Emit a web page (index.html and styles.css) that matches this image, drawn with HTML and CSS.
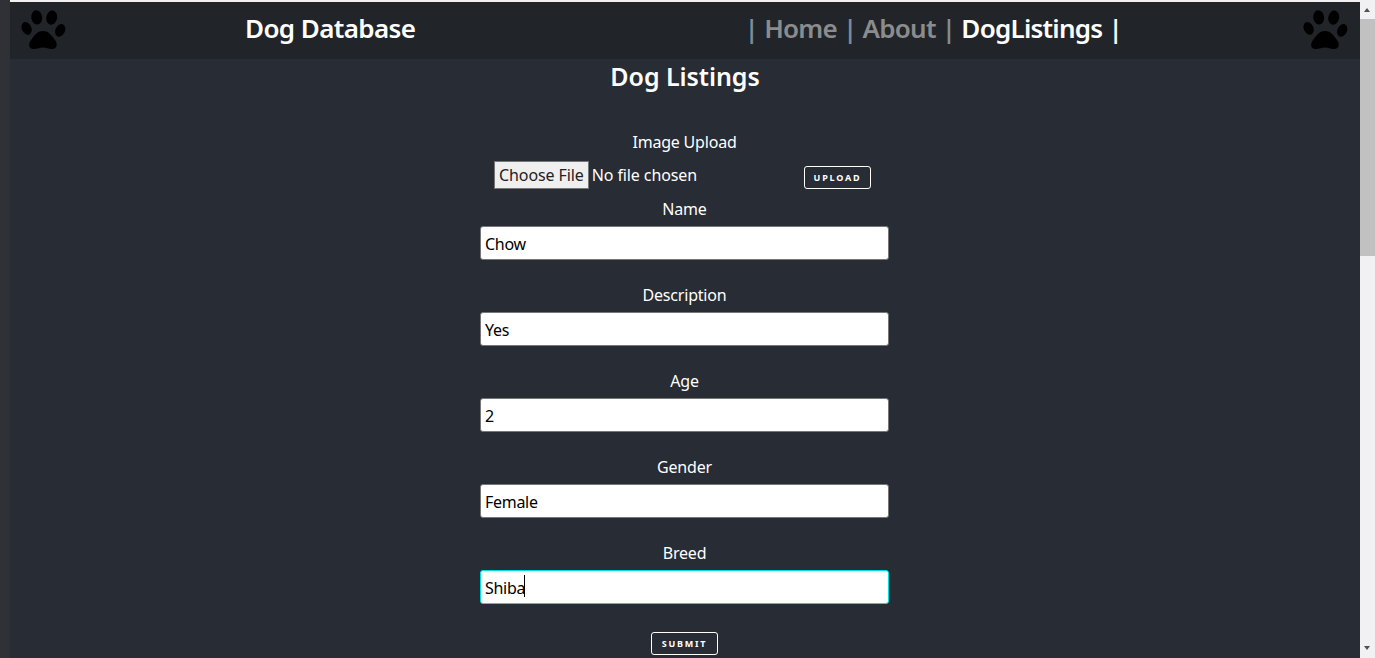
FILE: index.html
```html
<!DOCTYPE html>
<html lang="en">
<head>
<meta charset="utf-8">
<title>Dog Database</title>
<link rel="stylesheet" href="styles.css">
</head>
<body>
<div class="gutter"></div>
<div class="page">
  <nav class="navbar">
    <svg class="paw" viewBox="0 0 45 40" aria-hidden="true">
      <ellipse cx="15.7" cy="7.4" rx="5.4" ry="7.2" transform="rotate(-8 15.7 7.4)"/>
      <ellipse cx="30.7" cy="7.6" rx="5.4" ry="7.2" transform="rotate(10 30.7 7.6)"/>
      <ellipse cx="5.6" cy="18.4" rx="4.8" ry="6.6" transform="rotate(-24 5.6 18.4)"/>
      <ellipse cx="39.2" cy="20.4" rx="4.8" ry="6.6" transform="rotate(24 39.2 20.4)"/>
      <path d="M22 21C28 21 31 26 34 30C37 34 36 39 31 39C27 39 25 37.600 22 37.600C19 37.600 17 39 12.500 39C7.500 39 7 34 10 30C13 26 16 21 22 21Z"/>
    </svg>
    <a class="brand" href="#">Dog Database</a>
    <div class="links">
      <span class="pipe">|</span>
      <a class="link" href="#">Home</a>
      <span class="pipe">|</span>
      <a class="link" href="#">About</a>
      <span class="pipe">|</span>
      <a class="link active" href="#">DogListings</a>
      <span class="pipe last">|</span>
    </div>
    <svg class="paw" viewBox="0 0 45 40" aria-hidden="true">
      <ellipse cx="15.7" cy="7.4" rx="5.4" ry="7.2" transform="rotate(-8 15.7 7.4)"/>
      <ellipse cx="30.7" cy="7.6" rx="5.4" ry="7.2" transform="rotate(10 30.7 7.6)"/>
      <ellipse cx="5.6" cy="18.4" rx="4.8" ry="6.6" transform="rotate(-24 5.6 18.4)"/>
      <ellipse cx="39.2" cy="20.4" rx="4.8" ry="6.6" transform="rotate(24 39.2 20.4)"/>
      <path d="M22 21C28 21 31 26 34 30C37 34 36 39 31 39C27 39 25 37.600 22 37.600C19 37.600 17 39 12.500 39C7.500 39 7 34 10 30C13 26 16 21 22 21Z"/>
    </svg>
  </nav>
  <main class="content">
    <h1 class="title">Dog Listings</h1>
    <form class="form">
      <label class="label upload-label">Image Upload</label>
      <div class="upload-row">
        <input class="file" type="file">
        <button class="btn" type="button">Upload</button>
      </div>
      <div class="field">
        <label class="label">Name</label>
        <input class="input" type="text" value="Chow">
      </div>
      <div class="field">
        <label class="label">Description</label>
        <input class="input" type="text" value="Yes">
      </div>
      <div class="field">
        <label class="label">Age</label>
        <input class="input" type="text" value="2">
      </div>
      <div class="field">
        <label class="label">Gender</label>
        <input class="input" type="text" value="Female">
      </div>
      <div class="field">
        <label class="label">Breed</label>
        <div class="input-wrap">
          <input class="input focused" type="text" value="Shiba">
          <span class="caret"></span>
        </div>
      </div>
      <button class="btn submit" type="button">Submit</button>
    </form>
  </main>
</div>
<div class="scrollbar">
  <div class="arrow up"></div>
  <div class="track"><div class="thumb"></div></div>
  <div class="arrow down"></div>
</div>
</body>
</html>
```
FILE: styles.css
```css
* { box-sizing: border-box; }
html, body { height: 100%; }
body {
  margin: 0;
  display: flex;
  height: 658px;
  overflow: hidden;
  background: #282c34;
  color: #fff;
  font-family: "Noto Sans", "Open Sans", sans-serif;
}
.gutter { width: 10px; flex: none; background: #2f3136; }
.page {
  flex: 1;
  min-width: 0;
  border-top: 2px solid #f1f1f1;
  background: #282c34;
  overflow: hidden;
}
.navbar {
  height: 57px;
  background: #212529;
  display: flex;
  align-items: center;
  padding: 0 12px 0 11px;
}
.paw { width: 45px; height: 40px; flex: none; fill: #000; filter: blur(0.4px); margin-top: -2px; }
.brand {
  margin-left: 179px;
  margin-top: -6px;
  color: #fff;
  font-size: 26px;
  font-weight: 600;
  letter-spacing: -0.6px;
  text-decoration: none;
}
.links {
  margin-left: auto;
  margin-right: 181px;
  margin-top: -6px;
  display: flex;
  gap: 6px;
  font-size: 26px;
  font-weight: 600;
  letter-spacing: -0.75px;
}
.link { color: #8b8c8d; text-decoration: none; }
.link.active { color: #fff; }
.pipe { color: #7f8c99; }
.pipe.last { color: #fff; }
.content { display: flex; flex-direction: column; align-items: center; }
.title {
  margin: -1px 0 0;
  font-size: 25px;
  line-height: 36px;
  font-weight: 600;
  letter-spacing: -0.05px;
}
.form {
  width: 409px;
  margin-top: 35px;
  margin-right: 1px;
  display: flex;
  flex-direction: column;
  align-items: center;
}
.label { display: block; font-size: 16px; line-height: 26px; text-align: center; letter-spacing: -0.2px; }
.upload-row {
  width: 100%;
  display: flex;
  align-items: flex-start;
  justify-content: space-between;
  padding: 5px 18px 0 14px;
  height: 41px;
}
.file {
  width: 300px;
  margin-top: 1px;
  color: #fff;
  font: 16px/27px "Noto Sans", sans-serif;
  letter-spacing: -0.1px;
}
.file::file-selector-button {
  font: inherit;
  letter-spacing: -0.1px;
  height: 28px;
  padding: 0 4px;
  margin-right: 3px;
  border: 1px solid #767676;
  border-radius: 0;
  background: #efefef;
  color: #222;
}
.btn {
  width: 67px;
  height: 23px;
  margin-top: 6px;
  padding: 0;
  border: 1px solid #fff;
  border-radius: 3px;
  background: transparent;
  color: #fff;
  font: 700 9px/1 "Noto Sans", sans-serif;
  letter-spacing: 1.800px;
  text-transform: uppercase;
}
.field { width: 100%; height: 86px; display: flex; flex-direction: column; }
.field .label { margin-bottom: 4px; }
.input-wrap { position: relative; }
.input {
  display: block;
  width: 100%;
  height: 34px;
  padding: 2px 4px 0;
  border: 1px solid #767676;
  border-radius: 3px;
  background: #fff;
  color: #000;
  font: 16px "Noto Sans", sans-serif;
  letter-spacing: -0.3px;
  outline: none;
}
.input.focused { border-color: #00e0e0; }
.caret {
  position: absolute;
  left: 44px;
  top: 5px;
  width: 1px;
  height: 22px;
  background: #000;
}
.btn.submit { margin-top: 6px; }
.scrollbar {
  width: 15px;
  flex: none;
  background: #f1f1f3;
  display: flex;
  flex-direction: column;
}
.arrow { height: 19px; flex: none; position: relative; }
.arrow::after {
  content: "";
  position: absolute;
  left: 4px;
  border-left: 3.500px solid transparent;
  border-right: 3.500px solid transparent;
}
.arrow.up::after { top: 8px; border-bottom: 4px solid #505050; }
.arrow.down::after { bottom: 8px; border-top: 4px solid #505050; }
.track { flex: 1; }
.thumb { height: 237px; background: #c1c1c1; }
```
